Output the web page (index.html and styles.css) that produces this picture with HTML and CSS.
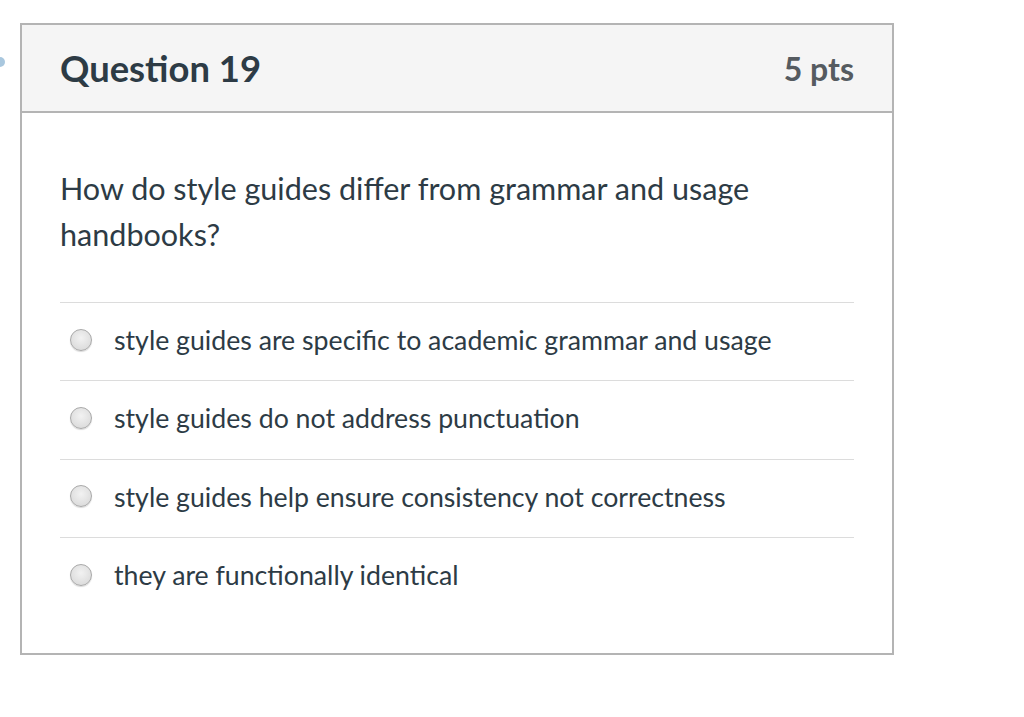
FILE: index.html
```html
<!DOCTYPE html>
<html>
<head>
<meta charset="utf-8">
<link rel="stylesheet" href="styles.css">
</head>
<body>
<div class="flag-dot"></div>
<div class="question">
  <div class="q-header">
    <h2 class="q-title">Question 19</h2>
    <span class="q-points">5 pts</span>
  </div>
  <div class="q-body">
    <p class="q-text">How do style guides differ from grammar and usage handbooks?</p>
    <ul class="answers">
      <li class="answer"><span class="radio"></span><span class="answer-text">style guides are specific to academic grammar and usage</span></li>
      <li class="answer"><span class="radio"></span><span class="answer-text">style guides do not address punctuation</span></li>
      <li class="answer"><span class="radio"></span><span class="answer-text">style guides help ensure consistency not correctness</span></li>
      <li class="answer"><span class="radio"></span><span class="answer-text">they are functionally identical</span></li>
    </ul>
  </div>
</div>
</body>
</html>
```

FILE: styles.css
```css
html, body {
  margin: 0;
  padding: 0;
  background: #ffffff;
}
body {
  font-family: Lato, "Open Sans", sans-serif;
  color: #2d3b45;
  padding: 23px 0 0 20px;
  position: relative;
}
.flag-dot {
  position: absolute;
  left: -5px;
  top: 57px;
  width: 10px;
  height: 10px;
  border-radius: 50%;
  background: #a9c7de;
}
.question {
  width: 870px;
  height: 628px;
  border: 2px solid #b4b4b4;
  display: flex;
  flex-direction: column;
}
.q-header {
  background: #f5f5f5;
  height: 86px;
  border-bottom: 2px solid #b4b4b4;
  display: flex;
  align-items: center;
  justify-content: space-between;
  padding: 0 38px;
}
.q-title {
  margin: 0;
  font-size: 36.4px;
  font-weight: 700;
  color: #2d3b45;
}
.q-points {
  font-size: 32px;
  font-weight: 700;
  color: #555b60;
}
.q-body {
  padding: 53px 38px 0 38px;
}
.q-text {
  margin: 0 0 44px 0;
  font-size: 30.55px;
  line-height: 46px;
  width: 760px;
}
.answers {
  list-style: none;
  margin: 0;
  padding: 0;
  border-top: 1px solid #dcdcdc;
}
.answer {
  height: 77.3px;
  display: flex;
  align-items: center;
  border-bottom: 1px solid #dcdcdc;
  padding-left: 10px;
}
.answer:last-child {
  border-bottom: none;
}
.radio {
  width: 20px;
  height: 20px;
  border-radius: 50%;
  border: 1px solid #a9a9a9;
  background: radial-gradient(circle at 50% 40%, #f2f2f2 0%, #dedede 70%, #d0d0d0 100%);
  box-shadow: 0 1px 1px rgba(0,0,0,0.15);
  margin-right: 22px;
  flex: none;
  position: relative;
  top: -2px;
}
.answer-text {
  font-size: 26.7px;
  color: #2d3b45;
  padding-bottom: 3px;
}
```
